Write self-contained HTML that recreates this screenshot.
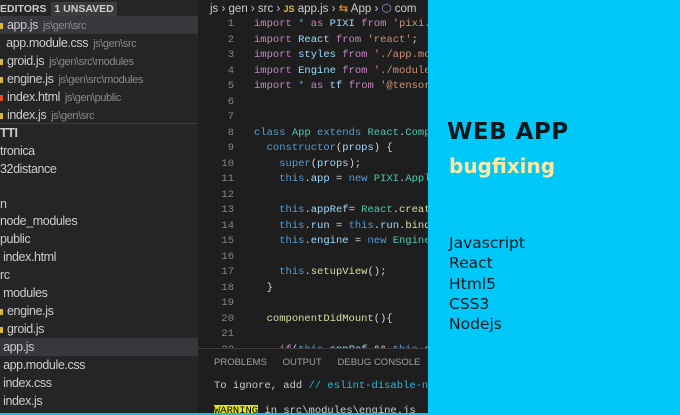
<!DOCTYPE html>
<html><head><meta charset="utf-8"><style>
*{margin:0;padding:0;box-sizing:border-box}
body{width:680px;height:415px;overflow:hidden;background:#1e1e1e;position:relative;font-family:"Liberation Sans",sans-serif}
.side{position:absolute;left:0;top:0;width:198px;height:415px;background:#252526;color:#ccc;font-size:12.5px;letter-spacing:-0.4px}
.row{position:absolute;left:0;width:198px;height:18px;line-height:18px;white-space:nowrap}
.row .d{color:#8a8a8a;font-size:11px;margin-left:5px}
.sel{background:#37373d}
.dot{display:inline-block;width:3px;height:6px;background:#d7ba3d;margin-right:4px;vertical-align:middle}
.ed{position:absolute;left:198px;top:0;width:230px;height:348px;background:#1e1e1e;overflow:hidden}
.code{position:absolute;top:17px;left:0;width:230px;height:340px;font-family:"Liberation Mono",monospace;font-size:10.5px;line-height:15.5px;white-space:pre}
.ln{position:absolute;top:0;left:0;width:36px;text-align:right;color:#858585}
.tx{position:absolute;top:0;left:56px;color:#d4d4d4}
.k{color:#c586c0}.v{color:#9cdcfe}.s{color:#ce9178}.t{color:#4ec9b0}.b{color:#569cd6}.f{color:#dcdcaa}.w{color:#d4d4d4}
.panel{position:absolute;left:198px;top:348px;width:230px;height:67px;background:#1e1e1e;border-top:1px solid #3c3c3c;overflow:hidden}
.right{position:absolute;left:428px;top:0;width:252px;height:415px;background:#00c8f8;font-family:"DejaVu Sans",sans-serif}
</style></head><body>
<div class="side">
<div class="row" style="top:0;font-size:10.5px;font-weight:bold;color:#ccc;letter-spacing:0">EDITORS <span style="background:#3c3c3c;padding:1px 3px;margin-left:2px">1 UNSAVED</span></div>
<div class="row sel" style="top:16px"><span class="dot"></span>app.js<span class="d">js\gen\src</span></div>
<div class="row" style="top:34px">&nbsp;&nbsp;app.module.css<span class="d">js\gen\src</span></div>
<div class="row" style="top:52px"><span class="dot"></span>groid.js<span class="d">js\gen\src\modules</span></div>
<div class="row" style="top:70px"><span class="dot"></span>engine.js<span class="d">js\gen\src\modules</span></div>
<div class="row" style="top:88px"><span class="dot" style="background:#e44d26"></span>index.html<span class="d">js\gen\public</span></div>
<div class="row" style="top:106px"><span class="dot"></span>index.js<span class="d">js\gen\src</span></div>
<div style="position:absolute;top:123px;left:0;width:198px;height:1px;background:#3c3c3c"></div>
<div class="row" style="top:124px;font-weight:bold">TTI</div>
<div class="row" style="top:142px">tronica</div>
<div class="row" style="top:160px">32distance</div>
<div class="row" style="top:195px">n</div>
<div class="row" style="top:212px">node_modules</div>
<div class="row" style="top:230px">public</div>
<div class="row" style="top:248px">&nbsp;index.html</div>
<div class="row" style="top:266px">rc</div>
<div class="row" style="top:284px">&nbsp;modules</div>
<div class="row" style="top:302px"><span class="dot"></span>engine.js</div>
<div class="row" style="top:320px"><span class="dot"></span>groid.js</div>
<div class="row sel" style="top:338px">&nbsp;app.js</div>
<div class="row" style="top:356px">&nbsp;app.module.css</div>
<div class="row" style="top:374px">&nbsp;index.css</div>
<div class="row" style="top:392px">&nbsp;index.js</div>
</div>
<div class="ed">
<div style="position:absolute;top:1px;left:12px;font-size:11.5px;color:#ccc;white-space:nowrap">js › gen › src › <span style="color:#d7ba3d;font-size:9px;font-weight:bold">JS</span> app.js › <span style="color:#ee9d28">⇆</span> App › <span style="color:#b180d7">⬡</span> com</div>
<div class="code"><div class="ln">1
2
3
4
5
6
7
8
9
10
11
12
13
14
15
16
17
18
19
20
21
22</div><div class="tx"><span class="k">import</span> <span class="b">*</span> <span class="k">as</span> <span class="v">PIXI</span> <span class="k">from</span> <span class="s">'pixi.js'</span>
<span class="k">import</span> <span class="v">React</span> <span class="k">from</span> <span class="s">'react'</span>;
<span class="k">import</span> <span class="v">styles</span> <span class="k">from</span> <span class="s">'./app.module'</span>
<span class="k">import</span> <span class="v">Engine</span> <span class="k">from</span> <span class="s">'./modules'</span>
<span class="k">import</span> <span class="b">*</span> <span class="k">as</span> <span class="v">tf</span> <span class="k">from</span> <span class="s">'@tensorflow'</span>


<span class="b">class</span> <span class="t">App</span> <span class="b">extends</span> <span class="t">React</span>.<span class="t">Component</span>
  <span class="b">constructor</span>(<span class="v">props</span>) {
    <span class="b">super</span>(<span class="v">props</span>);
    <span class="b">this</span>.<span class="v">app</span> = <span class="b">new</span> <span class="t">PIXI</span>.<span class="t">Application</span>

    <span class="b">this</span>.<span class="v">appRef</span>= <span class="t">React</span>.<span class="f">createRef</span>
    <span class="b">this</span>.<span class="v">run</span> = <span class="b">this</span>.<span class="v">run</span>.<span class="f">bind</span>
    <span class="b">this</span>.<span class="v">engine</span> = <span class="b">new</span> <span class="t">Engine</span>

    <span class="b">this</span>.<span class="f">setupView</span>();
  }

  <span class="f">componentDidMount</span>(){

    <span class="k">if</span>(<span class="b">this</span>.<span class="v">appRef</span> &amp;&amp; <span class="b">this</span>.<span class="v">app</span></div></div>
</div>
<div class="panel">
<div style="position:absolute;top:8px;left:16px;font-size:9.5px;color:#a0a0a0;white-space:nowrap">PROBLEMS&nbsp;&nbsp;&nbsp;&nbsp;&nbsp;&nbsp;OUTPUT&nbsp;&nbsp;&nbsp;&nbsp;&nbsp;&nbsp;DEBUG CONSOLE&nbsp;&nbsp;&nbsp;&nbsp;&nbsp;&nbsp;<span style="color:#e7e7e7;border-bottom:1px solid #e7e7e7">TERMINAL</span></div>
<div style="position:absolute;top:31px;left:16px;font-family:'Liberation Mono',monospace;font-size:10.5px;color:#ccc;white-space:pre">To ignore, add <span style="color:#29b8db">// eslint-disable-next-line</span></div>
<div style="position:absolute;top:56px;left:16px;font-family:'Liberation Mono',monospace;font-size:10.5px;color:#ccc;white-space:pre"><span style="background:#e5e510;color:#000">WARNING</span> in src\modules\engine.js</div>
</div>
<div style="position:absolute;left:0;top:413px;width:428px;height:2px;background:#00c8f8"></div>
<div class="right">
<div style="position:absolute;left:19px;top:119px;font-size:23px;font-weight:bold;color:#0c1a20;letter-spacing:0.5px">WEB APP</div>
<div style="position:absolute;left:21px;top:154px;font-size:20px;font-weight:bold;color:#fde9a0">bugfixing</div>
<div style="position:absolute;left:21px;top:233px;font-size:15.5px;line-height:20.3px;color:#0c1a20">Javascript<br>React<br>Html5<br>CSS3<br>Nodejs</div>
</div>
</body></html>
